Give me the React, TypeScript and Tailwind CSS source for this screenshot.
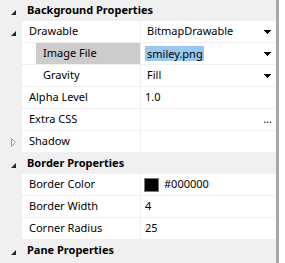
import React from "react";

const Expanded = () => (
  <svg width="5" height="5" viewBox="0 0 5 5" className="block">
    <polygon points="5,0 5,5 0,5" fill="#262626" />
  </svg>
);

const Collapsed = () => (
  <svg width="6" height="9" viewBox="0 0 6 9" className="block">
    <polygon points="0.5,0.5 4.5,4.5 0.5,8.5" fill="none" stroke="#a0a0a0" strokeWidth="1" />
  </svg>
);

const DropArrow = () => (
  <svg width="7" height="4" viewBox="0 0 7 4" className="block" shapeRendering="crispEdges">
    <rect x="0" y="0" width="7" height="1" fill="#000" />
    <rect x="1" y="1" width="5" height="1" fill="#000" />
    <rect x="2" y="2" width="3" height="1" fill="#000" />
    <rect x="3" y="3" width="1" height="1" fill="#000" />
  </svg>
);

function Header({ title }: { title: string }) {
  return (
    <div className="flex h-[21px] items-center bg-[#f0f0f0]">
      <div className="flex w-[22px] shrink-0 items-center pl-[11px] pt-[3px]">
        <Expanded />
      </div>
      <span className="pl-[5px] text-[11px] font-bold text-black">{title}</span>
    </div>
  );
}

function Row({
  name,
  children,
  glyph,
  nested = false,
  selected = false,
}: {
  name: string;
  children?: React.ReactNode;
  glyph?: React.ReactNode;
  nested?: boolean;
  selected?: boolean;
}) {
  return (
    <div className="flex h-[22px]">
      <div className="flex w-[22px] shrink-0 items-center bg-[#f0f0f0] pl-[11px]">{glyph}</div>
      <div className="flex flex-1 border-b border-[#f0f0f0]">
        <div className="flex w-[119px] shrink-0 border-r border-[#f0f0f0]">
          {nested && <div className="w-[14px] shrink-0" />}
          <div
            className={`flex flex-1 items-center pl-[7px] ${selected ? "bg-[#cccccc]" : ""}`}
          >
            {name}
          </div>
        </div>
        <div className="flex flex-1 items-center">{children}</div>
      </div>
    </div>
  );
}

function Combo({ value, highlight = false }: { value: string; highlight?: boolean }) {
  return (
    <div className="flex flex-1 items-center justify-between pr-[5px]">
      {highlight ? (
        <span className="ml-[4px] bg-[#99c9ef] pl-[2px] pr-[1px] leading-[15px]">{value}</span>
      ) : (
        <span className="pl-[6px]">{value}</span>
      )}
      <DropArrow />
    </div>
  );
}

export default function App() {
  return (
    <div
      className="h-[263px] w-[285px] overflow-hidden bg-white text-[11px] text-black"
      style={{ fontFamily: "'Noto Sans', 'Open Sans', sans-serif" }}
    >
      <div className="w-[279px] border-r-[3px] border-[#a8a8a8]">
        <Header title="Background Properties" />
        <Row name="Drawable" glyph={<div className="pt-[2px]"><Expanded /></div>}>
          <Combo value="BitmapDrawable" />
        </Row>
        <Row name="Image File" nested selected>
          <Combo value="smiley.png" highlight />
        </Row>
        <Row name="Gravity" nested>
          <Combo value="Fill" />
        </Row>
        <Row name="Alpha Level">
          <span className="pl-[4px]">1.0</span>
        </Row>
        <Row name="Extra CSS">
          <div className="flex flex-1 justify-end pr-[4px]">...</div>
        </Row>
        <Row name="Shadow" glyph={<Collapsed />} />
        <Header title="Border Properties" />
        <Row name="Border Color">
          <div className="ml-[3px] h-[14px] w-[15px] border border-[#7a7a7a] bg-black" />
          <span className="pl-[5px]">#000000</span>
        </Row>
        <Row name="Border Width">
          <span className="pl-[4px]">4</span>
        </Row>
        <Row name="Corner Radius">
          <span className="pl-[4px]">25</span>
        </Row>
        <Header title="Pane Properties" />
        <div className="h-[10px] bg-[#f0f0f0]" />
      </div>
    </div>
  );
}
